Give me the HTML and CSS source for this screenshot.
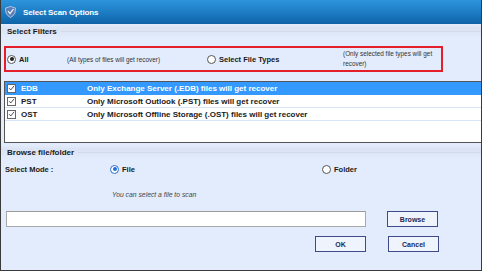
FILE: index.html
```html
<!DOCTYPE html>
<html>
<head>
<meta charset="utf-8">
<link rel="stylesheet" href="styles.css">
</head>
<body>
<div class="window">
  <div class="titlebar">
    <svg class="app-icon" width="11" height="12" viewBox="0 0 11 12">
      <path d="M5.5 0.5 L10.5 2 L10 7 Q8.5 10 5.5 11.5 Q2.5 10 1 7 L0.5 2 Z" fill="#5b7fb5" stroke="#c8d6ee" stroke-width="0.8"/>
      <path d="M3 5 L5 7.5 L8.5 3" fill="none" stroke="#ffffff" stroke-width="1.2"/>
    </svg>
    <span class="title">Select Scan Options</span>
  </div>
  <div class="content">
    <div class="group-head"><span class="group-label">Select Filters</span><span class="group-line"></span></div>
    <div class="filter-box">
      <div class="opt opt-all">
        <span class="radio checked"></span><span class="opt-label">All</span>
      </div>
      <div class="opt-note note-all">(All types of files will get recover)</div>
      <div class="opt opt-types">
        <span class="radio"></span><span class="opt-label">Select File Types</span>
      </div>
      <div class="opt-note note-types">(Only selected file types will get recover)</div>
    </div>
    <div class="list">
      <div class="row selected">
        <span class="check"><svg width="8" height="8" viewBox="0 0 8 8"><path d="M1.2 4.2 L3.2 6.2 L7 1.5" fill="none" stroke="#333" stroke-width="1"/></svg></span>
        <span class="ext">EDB</span><span class="desc">Only Exchange Server (.EDB) files will get recover</span>
      </div>
      <div class="row">
        <span class="check"><svg width="8" height="8" viewBox="0 0 8 8"><path d="M1.2 4.2 L3.2 6.2 L7 1.5" fill="none" stroke="#333" stroke-width="1"/></svg></span>
        <span class="ext">PST</span><span class="desc">Only Microsoft Outlook (.PST) files will get recover</span>
      </div>
      <div class="row">
        <span class="check"><svg width="8" height="8" viewBox="0 0 8 8"><path d="M1.2 4.2 L3.2 6.2 L7 1.5" fill="none" stroke="#333" stroke-width="1"/></svg></span>
        <span class="ext">OST</span><span class="desc">Only Microsoft Offline Storage (.OST) files will get recover</span>
      </div>
    </div>
    <div class="group-head browse-head"><span class="group-label">Browse file/folder</span><span class="group-line"></span></div>
    <div class="mode-row">
      <span class="mode-label">Select Mode :</span>
      <div class="opt mode-file"><span class="radio blue"></span><span class="opt-label">File</span></div>
      <div class="opt mode-folder"><span class="radio"></span><span class="opt-label">Folder</span></div>
    </div>
    <div class="hint">You can select a file to scan</div>
    <div class="path-row">
      <div class="path-input"></div>
      <div class="btn">Browse</div>
    </div>
    <div class="btn-row">
      <div class="btn">OK</div>
      <div class="btn">Cancel</div>
    </div>
  </div>
</div>
</body>
</html>
```
FILE: styles.css
```css
* { box-sizing: border-box; }
html, body { margin: 0; padding: 0; background: #ffffff; }
body { font-family: "Liberation Sans", Arial, sans-serif; color: #1a1a1a; }
.window {
  width: 482px; height: 271px;
  border: 1px solid #3a3a3a;
  border-top: none;
  background: #e3ecfc;
  display: flex; flex-direction: column;
  overflow: hidden;
}
.titlebar {
  height: 24px;
  background: linear-gradient(#2d95dc, #1a78c0 60%, #0f63a6);
  display: flex; align-items: center;
  padding-left: 4px;
  gap: 7px;
}
.app-icon { display: block; }
.title { color: #fff; font-weight: bold; font-size: 8px; letter-spacing: -0.1px; }
.content { flex: 1; display: flex; flex-direction: column; position: relative; }
.group-head {
  display: flex; align-items: center; gap: 4px;
  height: 14px; margin-top: 0px;
  padding-left: 6px;
  background: linear-gradient(#e3ecfc 0, #dbe3f3 30%, #e3ecfc 100%);
}
.group-label { font-weight: bold; font-size: 8px; white-space: nowrap; }
.group-line { flex: 1; height: 1px; background: #d3dbea; }
.filter-box {
  margin: 8px 38px 0 3px;
  height: 26px;
  border: 2px solid #e41e2b;
  position: relative;
  display: flex; align-items: center;
}
.opt { display: flex; align-items: center; gap: 3px; }
.radio {
  width: 9px; height: 9px; border-radius: 50%;
  border: 1px solid #555; background: #fff;
  position: relative; flex: none;
}
.radio.checked::after {
  content: ""; position: absolute; left: 1.5px; top: 1.5px;
  width: 4px; height: 4px; border-radius: 50%; background: #222;
}
.radio.blue { border-color: #2a6fd0; }
.radio.blue::after {
  content: ""; position: absolute; left: 1.5px; top: 1.5px;
  width: 4px; height: 4px; border-radius: 50%; background: #1e6ee0;
}
.opt-label { font-weight: bold; font-size: 7.5px; }
.opt-all { margin-left: 1px; width: 60px; }
.opt-note { font-size: 6.4px; color: #333; }
.note-all { width: 140px; }
.opt-types { width: 136px; }
.note-types { width: 98px; line-height: 10px; }
.list {
  margin: 9px 0 0 3px;
  height: 62px;
  background: #fff;
  border: 1px solid #555;
  border-right: none;
}
.row {
  height: 13px;
  display: flex; align-items: center;
  border-bottom: 1px solid #d6e6f7;
  font-weight: bold; font-size: 8px;
}
.row.selected { background: #3399ff; color: #fff; border-bottom-color: #3399ff; }
.check {
  width: 9px; height: 9px; margin-left: 2px;
  border: 1px solid #666; background: #fff;
  display: flex; align-items: center; justify-content: center;
}
.check svg { display: block; }
.ext { width: 71px; padding-left: 5px; }
.desc { white-space: nowrap; }
.browse-head { margin-top: 2px; }
.mode-row {
  display: flex; align-items: center;
  height: 12px; margin-top: 4px;
}
.mode-label { font-weight: bold; font-size: 7.5px; width: 109px; padding-left: 4px; }
.mode-file { width: 212px; }
.hint { font-style: italic; font-size: 6.8px; color: #444; margin: 16px 0 0 111px; }
.path-row { display: flex; align-items: center; margin-top: 13px; padding-left: 5px; }
.path-input {
  width: 360px; height: 16px;
  background: #fff;
  border: 1px solid #a8a8a8;
  border-top-color: #9c9c9c;
}
.btn {
  width: 51px; height: 16px;
  border: 1px solid #3f4a8c;
  background: #eef3fc;
  font-weight: bold; font-size: 7px; color: #1d2a55;
  display: flex; align-items: center; justify-content: center;
}
.path-row .btn { margin-left: 21px; }
.btn-row { display: flex; gap: 22px; margin-top: 9px; padding-left: 314px; }
```
